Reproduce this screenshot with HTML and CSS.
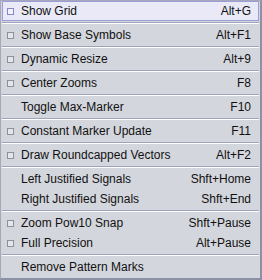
FILE: index.html
```html
<!DOCTYPE html>
<html lang="en">
  <head>
    <meta charset="UTF-8" />
    <title>View Menu</title>
    <link rel="stylesheet" href="styles.css">
  </head>
  <body>
    <!-- Popup menu -->
    <div class="menu">
      <div class="item active"><span class="check"></span><span class="label">Show Grid</span><span class="key">Alt+G</span></div>
      <div class="sep"></div>
      <div class="item"><span class="check"></span><span class="label">Show Base Symbols</span><span class="key">Alt+F1</span></div>
      <div class="sep"></div>
      <div class="item"><span class="check"></span><span class="label">Dynamic Resize</span><span class="key">Alt+9</span></div>
      <div class="sep"></div>
      <div class="item"><span class="check"></span><span class="label">Center Zooms</span><span class="key">F8</span></div>
      <div class="sep"></div>
      <div class="item"><span class="nocheck"></span><span class="label">Toggle Max-Marker</span><span class="key">F10</span></div>
      <div class="sep"></div>
      <div class="item"><span class="check"></span><span class="label">Constant Marker Update</span><span class="key">F11</span></div>
      <div class="sep"></div>
      <div class="item"><span class="check"></span><span class="label">Draw Roundcapped Vectors</span><span class="key">Alt+F2</span></div>
      <div class="sep"></div>
      <div class="item"><span class="nocheck"></span><span class="label">Left Justified Signals</span><span class="key">Shft+Home</span></div>
      <div class="item"><span class="nocheck"></span><span class="label">Right Justified Signals</span><span class="key">Shft+End</span></div>
      <div class="sep"></div>
      <div class="item"><span class="check"></span><span class="label">Zoom Pow10 Snap</span><span class="key">Shft+Pause</span></div>
      <div class="item"><span class="check"></span><span class="label">Full Precision</span><span class="key">Alt+Pause</span></div>
      <div class="sep"></div>
      <div class="item"><span class="nocheck"></span><span class="label">Remove Pattern Marks</span><span class="key"></span></div>
    </div>
  </body>
</html>
```

FILE: styles.css
```css
/* Page */
body {
  margin: 0;
  font-family: "Liberation Sans", Arial, sans-serif;
  font-size: 12px;
  color: #111;
}

/* Menu frame */
.menu {
  width: 262px;
  height: 280px;
  box-sizing: border-box;
  background-color: #d4d6dd;
  border-top: 1px solid #a4a8b8;
  border-left: 1px solid #a4a8b8;
  border-right: 2px solid #8c90a4;
  border-bottom: 2px solid #8c90a4;
  padding: 0 1px;
}

/* Menu rows */
.item {
  display: flex;
  align-items: center;
  height: 20px;
  box-sizing: border-box;
  padding: 0 8px 0 5px;
}

.item.active {
  background-color: #e9e9f8;
  border: 1px solid #9c9cd8;
  padding: 0 7px 0 4px;
}

.check,
.nocheck {
  width: 7px;
  height: 7px;
  margin-right: 7px;
  flex-shrink: 0;
}

.check {
  box-sizing: border-box;
  border: 1px solid #8e909c;
  background-color: #e4e6ea;
}

.active .check {
  border-color: #8888c8;
  background-color: #f2f2fc;
}

.label {
  flex: 1;
  white-space: nowrap;
}

.key {
  white-space: nowrap;
}

/* Separator line */
.sep {
  height: 2px;
  margin: 1px 0;
  border-top: 1px solid #9ea2ba;
  border-bottom: 1px solid #ffffff;
  box-sizing: border-box;
}
```
